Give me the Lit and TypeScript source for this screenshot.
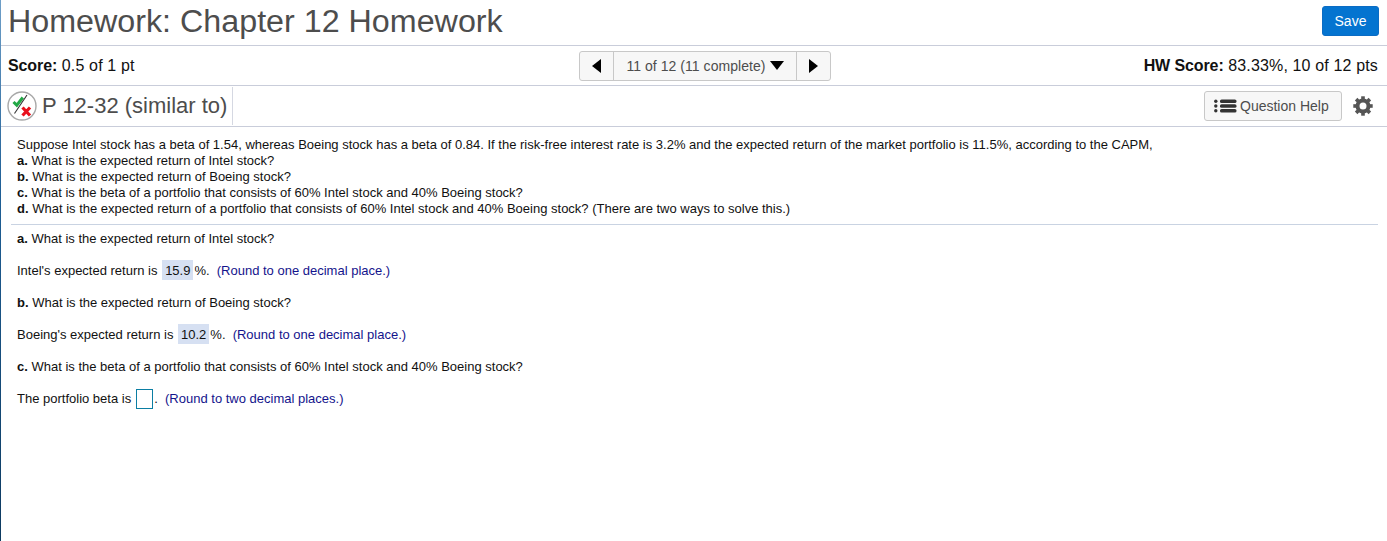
import { LitElement, html, css, svg } from "lit";
import { customElement } from "lit/decorators.js";

const GEAR_TEETH = [0, 45, 90, 135, 180, 225, 270, 315];

@customElement("app-root")
export class AppRoot extends LitElement {
  static styles = css`
    :host {
      display: block;
      height: 541px;
      overflow: hidden;
      background: #fff;
      font-family: "Liberation Sans", Arial, sans-serif;
      color: #111;
    }
    .page {
      height: 541px;
      box-sizing: border-box;
      border-left: 1px solid #1f5f96;
      border-image: linear-gradient(#6f9fc8, #1f5f96 35%, #0d3a60) 1;
    }
    .title-bar {
      height: 46px;
      box-sizing: border-box;
      border-bottom: 1px solid #c9cdda;
      display: flex;
      justify-content: space-between;
      padding: 0 8px 0 7px;
    }
    h1 {
      margin: 0;
      font-size: 32.25px;
      line-height: 43px;
      font-weight: 400;
      color: #4d4d4d;
    }
    .save {
      width: 57px;
      height: 30px;
      margin-top: 6px;
      box-sizing: border-box;
      border: 1px solid #0b6cc4;
      border-radius: 3px;
      background: #0474d0;
      color: #fff;
      font: 14px "Liberation Sans", Arial, sans-serif;
      padding: 0;
    }
    .score-bar {
      height: 40px;
      box-sizing: border-box;
      border-bottom: 1px solid #c9cdda;
      display: grid;
      grid-template-columns: 1fr auto 1fr;
      align-items: center;
      padding: 0 9px 0 7px;
      font-size: 16px;
      letter-spacing: 0.15px;
    }
    .hw {
      text-align: right;
    }
    b {
      font-weight: 700;
    }
    .score-bar b {
      letter-spacing: -0.1px;
    }
    .nav {
      display: flex;
      height: 30px;
      box-sizing: border-box;
      border: 1px solid #c8c8c8;
      border-radius: 3px;
      background: #f7f7f7;
      color: #4d4d4d;
      font-size: 14px;
      letter-spacing: 0.05px;
      margin-left: 24px;
    }
    .nav-arrow {
      width: 33px;
      display: flex;
      align-items: center;
      justify-content: center;
    }
    .nav-mid {
      border-left: 1px solid #c8c8c8;
      border-right: 1px solid #c8c8c8;
      display: flex;
      align-items: center;
      gap: 4px;
      padding: 0 12px 0 12px;
    }
    .question-bar {
      height: 41px;
      box-sizing: border-box;
      border-bottom: 1px solid #c9cdda;
      display: flex;
      align-items: stretch;
      padding: 1px 14px 1px 6px;
    }
    .question-id {
      display: flex;
      align-items: center;
      gap: 5px;
      padding-right: 5px;
      border-right: 1px solid #d5d8e2;
      font-size: 22px;
      color: #4d4d4d;
    }
    .tools {
      margin-left: auto;
      display: flex;
      align-items: center;
      gap: 11px;
    }
    .help {
      width: 138px;
      height: 30px;
      box-sizing: border-box;
      border: 1px solid #c8c8c8;
      border-radius: 3px;
      background: #f7f7f7;
      color: #4d4d4d;
      font-size: 14px;
      display: flex;
      align-items: center;
      gap: 3px;
      padding-left: 9px;
    }
    .content {
      padding: 10px 9px 0 16px;
      font-size: 13px;
      line-height: 16px;
    }
    .content p {
      margin: 0;
    }
    .stem {
      padding-bottom: 7px;
    }
    .answers {
      margin-left: -6px;
      padding: 6px 0 0 6px;
      border-top: 1px solid #c9d3e2;
    }
    .answers p {
      margin-bottom: 16px;
    }
    .filled {
      background: #d6e0f2;
      padding: 3px 3px 2px;
      margin: 0 1px 0 1px;
    }
    .hint {
      color: #14148c;
      margin-left: 3.5px;
    }
    .blank {
      display: inline-block;
      box-sizing: border-box;
      width: 17px;
      height: 20px;
      margin: -5px 1.5px -3px 1px;
      border: 1px solid #0b7ea3;
      vertical-align: middle;
    }
  `;

  render() {
    return html`
      <div class="page">
        <div class="title-bar">
          <h1>Homework: Chapter 12 Homework</h1>
          <button class="save">Save</button>
        </div>
        <div class="score-bar">
          <div><b>Score:</b> 0.5 of 1 pt</div>
          <div class="nav">
            <div class="nav-arrow">
              <svg width="9" height="14" viewBox="0 0 9 14"><path d="M9 0V14L0 7Z" fill="#000" /></svg>
            </div>
            <div class="nav-mid">
              <span>11 of 12 (11 complete)</span>
              <svg width="14" height="9" viewBox="0 0 14 9"><path d="M0 0H14L7 9Z" fill="#000" /></svg>
            </div>
            <div class="nav-arrow">
              <svg width="9" height="14" viewBox="0 0 9 14"><path d="M0 0V14L9 7Z" fill="#000" /></svg>
            </div>
          </div>
          <div class="hw"><b>HW Score:</b> 83.33%, 10 of 12 pts</div>
        </div>
        <div class="question-bar">
          <div class="question-id">
            <svg width="30" height="30" viewBox="0 0 30 30">
              <circle cx="15" cy="15" r="14" fill="#fff" stroke="#a8a8a8" stroke-width="1.4" />
              <path d="M6.5 11L9.8 14.2L15.8 6.5" fill="none" stroke="#22a846" stroke-width="3" />
              <path d="M7.5 22.5L20 4" stroke="#333" stroke-width="1.1" />
              <path d="M15.5 16.5L23 24.5M23 16.5L15.5 24.5" stroke="#e8101c" stroke-width="3.2" />
            </svg>
            <span>P 12-32 (similar to)</span>
          </div>
          <div class="tools">
            <div class="help">
              <svg width="23" height="14" viewBox="0 0 23 14" fill="#333">
                <circle cx="1.8" cy="2.2" r="1.7" />
                <circle cx="1.8" cy="7" r="1.7" />
                <circle cx="1.8" cy="11.8" r="1.7" />
                <rect x="6" y="0.4" width="16.5" height="3.6" rx="1.6" />
                <rect x="6" y="5.2" width="16.5" height="3.6" rx="1.6" />
                <rect x="6" y="10" width="16.5" height="3.6" rx="1.6" />
              </svg>
              <span>Question Help</span>
            </div>
            <svg width="20" height="20" viewBox="0 0 20 20">
              <circle cx="10" cy="10" r="5.5" fill="none" stroke="#555" stroke-width="4" />
              ${GEAR_TEETH.map(
                (deg) => svg`<rect x="8.2" y="0.3" width="3.6" height="4" fill="#555" transform="rotate(${deg} 10 10)" />`
              )}
            </svg>
          </div>
        </div>
        <div class="content">
          <div class="stem">
            <p>Suppose Intel stock has a beta of 1.54, whereas Boeing stock has a beta of 0.84. If the risk-free interest rate is 3.2% and the expected return of the market portfolio is 11.5%, according to the CAPM,</p>
            <p><b>a.</b> What is the expected return of Intel stock?</p>
            <p><b>b.</b> What is the expected return of Boeing stock?</p>
            <p><b>c.</b> What is the beta of a portfolio that consists of 60% Intel stock and 40% Boeing stock?</p>
            <p><b>d.</b> What is the expected return of a portfolio that consists of 60% Intel stock and 40% Boeing stock? (There are two ways to solve this.)</p>
          </div>
          <div class="answers">
            <p><b>a.</b> What is the expected return of Intel stock?</p>
            <p>Intel's expected return is <span class="filled">15.9</span>%. <span class="hint">(Round to one decimal place.)</span></p>
            <p><b>b.</b> What is the expected return of Boeing stock?</p>
            <p>Boeing's expected return is <span class="filled">10.2</span>%. <span class="hint">(Round to one decimal place.)</span></p>
            <p><b>c.</b> What is the beta of a portfolio that consists of 60% Intel stock and 40% Boeing stock?</p>
            <p>The portfolio beta is <span class="blank"></span>. <span class="hint">(Round to two decimal places.)</span></p>
          </div>
        </div>
      </div>
    `;
  }
}
